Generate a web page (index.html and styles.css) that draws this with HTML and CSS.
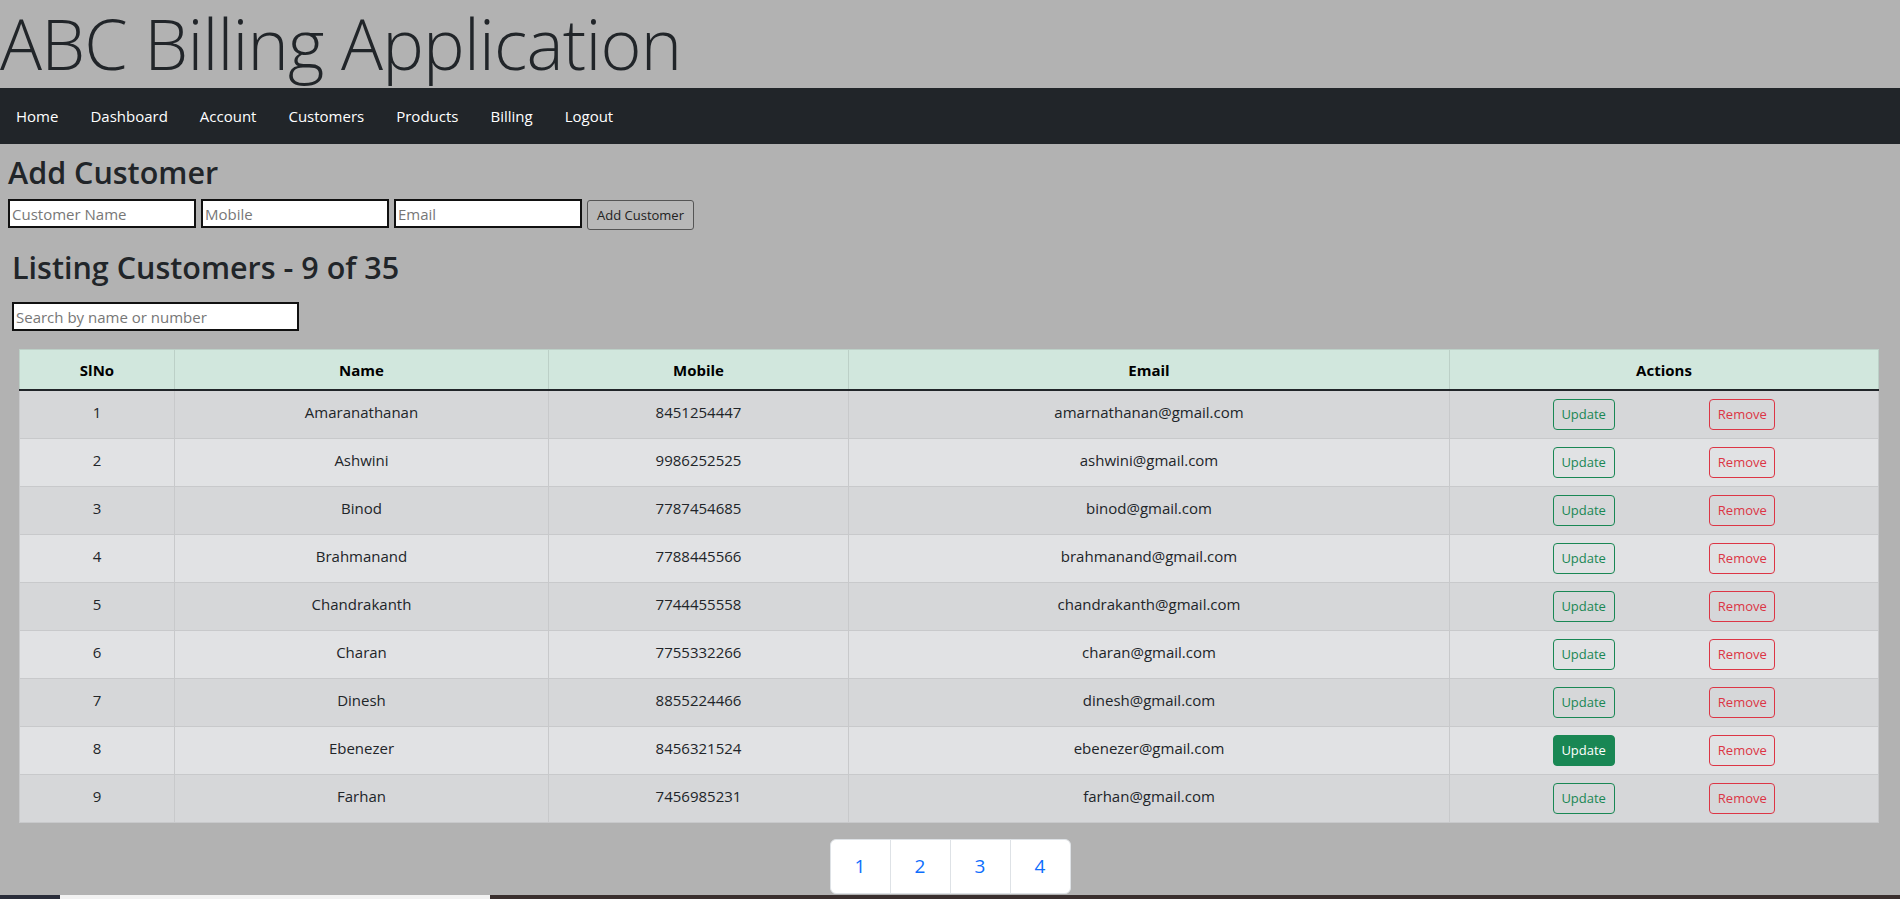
FILE: index.html
```html
<!DOCTYPE html>
<html lang="en">
<head>
<meta charset="utf-8">
<title>ABC Billing Application</title>
<link rel="stylesheet" href="styles.css">
</head>
<body>
<h1 class="app-title">ABC Billing Application</h1>
<nav class="navbar">
  <a class="nav-link" href="#">Home</a>
  <a class="nav-link" href="#">Dashboard</a>
  <a class="nav-link" href="#">Account</a>
  <a class="nav-link" href="#">Customers</a>
  <a class="nav-link" href="#">Products</a>
  <a class="nav-link" href="#">Billing</a>
  <a class="nav-link" href="#">Logout</a>
</nav>
<main class="page">
  <h2 class="section-title">Add Customer</h2>
  <form class="add-form">
    <input class="field" type="text" placeholder="Customer Name">
    <input class="field" type="text" placeholder="Mobile">
    <input class="field" type="text" placeholder="Email">
    <button class="plain-btn" type="button">Add Customer</button>
  </form>
  <section class="listing">
    <h2 class="section-title listing-title">Listing Customers - 9 of 35</h2>
    <input class="field search" type="text" placeholder="Search by name or number">
    <table class="data-table">
      <colgroup>
        <col class="c-sl"><col class="c-name"><col class="c-mobile"><col class="c-email"><col class="c-actions">
      </colgroup>
      <thead>
        <tr><th>SlNo</th><th>Name</th><th>Mobile</th><th>Email</th><th>Actions</th></tr>
      </thead>
      <tbody>
        <tr><td>1</td><td>Amaranathanan</td><td>8451254447</td><td>amarnathanan@gmail.com</td><td class="act-cell"><div class="actions"><button class="btn btn-update">Update</button><button class="btn btn-remove">Remove</button></div></td></tr>
        <tr><td>2</td><td>Ashwini</td><td>9986252525</td><td>ashwini@gmail.com</td><td class="act-cell"><div class="actions"><button class="btn btn-update">Update</button><button class="btn btn-remove">Remove</button></div></td></tr>
        <tr><td>3</td><td>Binod</td><td>7787454685</td><td>binod@gmail.com</td><td class="act-cell"><div class="actions"><button class="btn btn-update">Update</button><button class="btn btn-remove">Remove</button></div></td></tr>
        <tr><td>4</td><td>Brahmanand</td><td>7788445566</td><td>brahmanand@gmail.com</td><td class="act-cell"><div class="actions"><button class="btn btn-update">Update</button><button class="btn btn-remove">Remove</button></div></td></tr>
        <tr><td>5</td><td>Chandrakanth</td><td>7744455558</td><td>chandrakanth@gmail.com</td><td class="act-cell"><div class="actions"><button class="btn btn-update">Update</button><button class="btn btn-remove">Remove</button></div></td></tr>
        <tr><td>6</td><td>Charan</td><td>7755332266</td><td>charan@gmail.com</td><td class="act-cell"><div class="actions"><button class="btn btn-update">Update</button><button class="btn btn-remove">Remove</button></div></td></tr>
        <tr><td>7</td><td>Dinesh</td><td>8855224466</td><td>dinesh@gmail.com</td><td class="act-cell"><div class="actions"><button class="btn btn-update">Update</button><button class="btn btn-remove">Remove</button></div></td></tr>
        <tr><td>8</td><td>Ebenezer</td><td>8456321524</td><td>ebenezer@gmail.com</td><td class="act-cell"><div class="actions"><button class="btn btn-update is-active">Update</button><button class="btn btn-remove">Remove</button></div></td></tr>
        <tr><td>9</td><td>Farhan</td><td>7456985231</td><td>farhan@gmail.com</td><td class="act-cell"><div class="actions"><button class="btn btn-update">Update</button><button class="btn btn-remove">Remove</button></div></td></tr>
      </tbody>
    </table>
    <ul class="pagination">
      <li><a class="page-link" href="#">1</a></li>
      <li><a class="page-link" href="#">2</a></li>
      <li><a class="page-link" href="#">3</a></li>
      <li><a class="page-link" href="#">4</a></li>
    </ul>
  </section>
</main>
<div class="bottom-strip">
  <span class="seg seg-dark"></span><span class="seg seg-light"></span><span class="seg seg-brown"></span>
</div>
</body>
</html>
```
FILE: styles.css
```css
* { box-sizing: border-box; }
html, body { margin: 0; padding: 0; }
body {
  background: #b2b2b2;
  color: #212529;
  font-family: "Open Sans", "Noto Sans", sans-serif;
  font-size: 15px;
  line-height: 1.5;
}
.app-title {
  margin: 0;
  height: 88px;
  font-size: 70px;
  font-weight: 300;
  line-height: 87px;
  letter-spacing: -0.8px;
  color: #212529;
  white-space: nowrap;
}
.navbar {
  display: flex;
  background: #212529;
  padding: 8px 0;
  height: 56px;
}
.nav-link {
  display: block;
  padding: 8px 16px;
  line-height: 24px;
  font-size: 15px;
  color: #fff;
  text-decoration: none;
}
.page { padding: 0 8px; }
.section-title {
  margin: 9px 0 8px 0;
  font-size: 30.5px;
  font-weight: 600;
  line-height: 38px;
  color: #212529;
}
.add-form {
  display: flex;
  gap: 5px;
  align-items: flex-start;
  margin: 0;
}
.field {
  width: 188px;
  height: 29px;
  border: 2px solid #111;
  background: #fff;
  padding: 0 2px;
  font-family: "Open Sans", sans-serif;
  font-size: 15px;
  color: #212529;
}
.field::placeholder { color: #777; }
.plain-btn {
  margin-top: 1px;
  width: 107px;
  height: 30px;
  background: #b8b8b8;
  border: 1px solid #555;
  border-radius: 3px;
  font-family: "Open Sans", sans-serif;
  font-size: 13px;
  color: #222;
  padding: 0;
}
.listing { padding: 0; }
.listing-title { margin: 18px 0 16px 4px; }
.search { width: 287px; display: block; margin-left: 4px; }
.data-table {
  margin: 18px 0 0 11px;
  width: 1859px;
  border-collapse: collapse;
  table-layout: fixed;
  border: 1px solid #c8c9cb;
}
.c-sl { width: 155px; }
.c-name { width: 374px; }
.c-mobile { width: 300px; }
.c-email { width: 601px; }
.c-actions { width: 429px; }
.data-table th {
  background: #d1e7dd;
  border: 1px solid #bcd0c7;
  border-bottom: 2px solid #212529;
  padding: 8px 8px 7px;
  font-weight: 700;
  line-height: 24px;
  color: #000;
  text-align: center;
}
.data-table td {
  border: 1px solid #c8c9cb;
  padding: 9px 8px 7px;
  height: 48px;
  line-height: 24px;
  text-align: center;
  vertical-align: top;
  color: #212529;
  background: #e1e2e4;
}
.data-table td.act-cell { padding: 8px; vertical-align: middle; }
.data-table tbody tr:nth-child(odd) td { background: #d6d7d9; }
.actions {
  display: flex;
  justify-content: space-evenly;
  align-items: center;
}
.btn {
  height: 31px;
  padding: 0 7px;
  font-family: "Open Sans", sans-serif;
  font-size: 13px;
  line-height: 29px;
  border-radius: 4px;
  background: transparent;
  border: 1px solid;
}
.btn-update { color: #198754; border-color: #198754; width: 62px; }
.btn-update.is-active { background: #198754; color: #fff; }
.btn-remove { color: #dc3545; border-color: #dc3545; width: 66px; }
.pagination {
  list-style: none;
  margin: 16px auto 0;
  padding: 0;
  display: flex;
  width: max-content;
}
.pagination li + li .page-link { margin-left: -1px; }
.page-link {
  display: block;
  width: 61px;
  height: 55px;
  line-height: 53px;
  text-align: center;
  background: #fff;
  border: 1px solid #dee2e6;
  color: #0d6efd;
  font-size: 19px;
  text-decoration: none;
}
.pagination li:first-child .page-link { border-radius: 6px 0 0 6px; }
.pagination li:last-child .page-link { border-radius: 0 6px 6px 0; }
.bottom-strip {
  display: flex;
  height: 4px;
  margin-top: 1px;
}
.seg { display: block; height: 4px; }
.seg-dark { width: 60px; background: #2a2d3a; }
.seg-light { width: 430px; background: #f2f2f2; }
.seg-brown { flex: 1; background: #3a2f2e; }
```
